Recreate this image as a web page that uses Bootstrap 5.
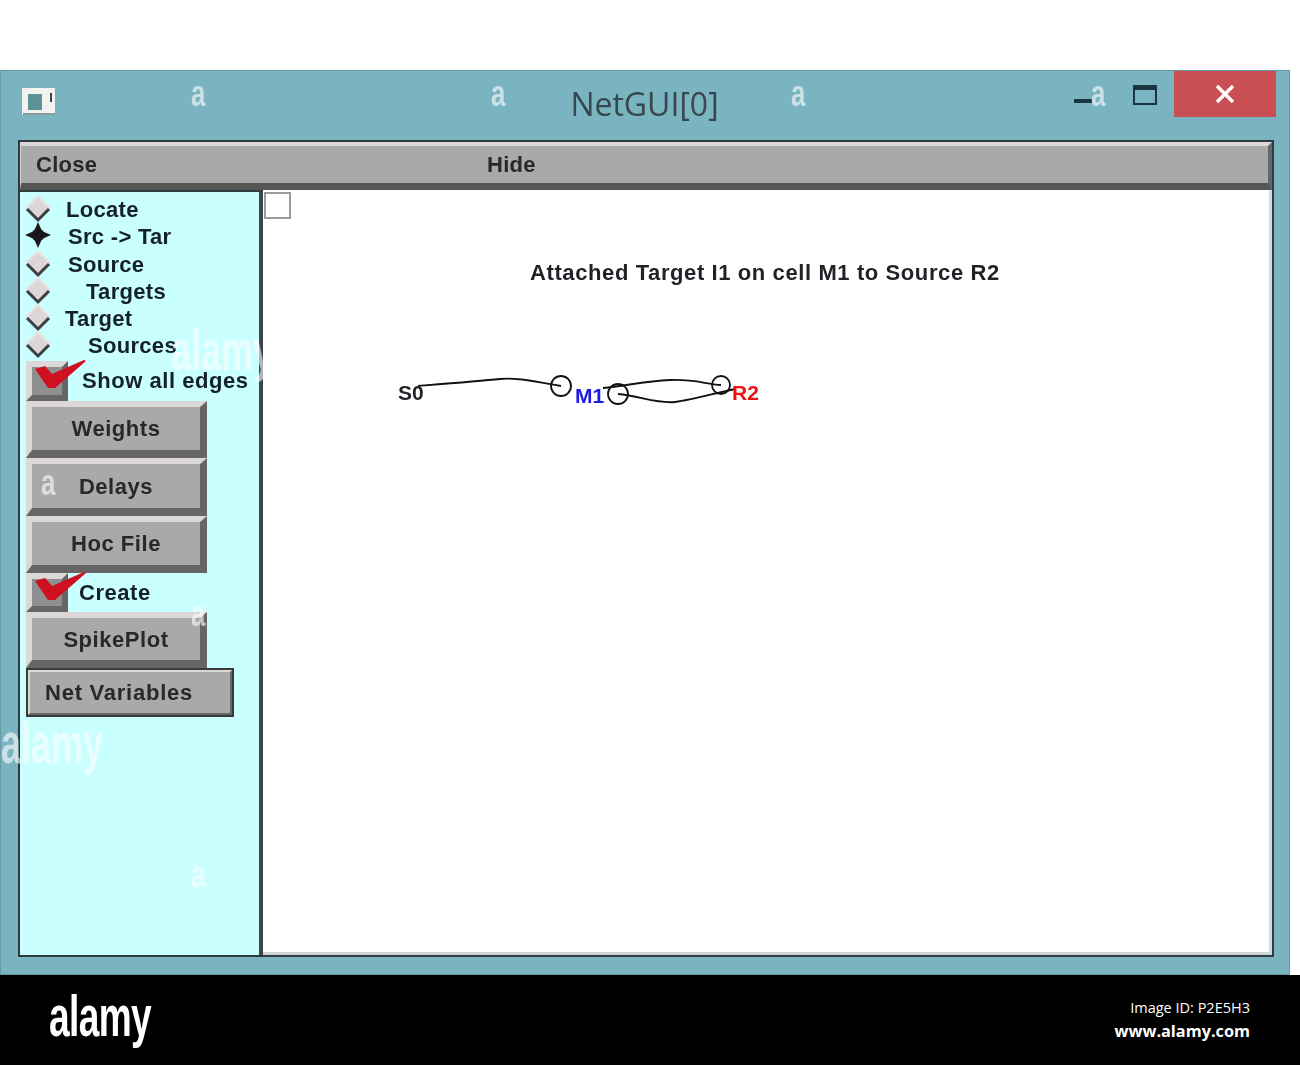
<!DOCTYPE html>
<html lang="en">
<head>
  <meta charset="UTF-8"/>
  <title>NetGUI[0]</title>
  <link href="https://cdn.jsdelivr.net/npm/bootstrap@5.3.0/dist/css/bootstrap.min.css" rel="stylesheet"/>
  <style>
    body { background: #fff; font-family: "Liberation Sans", Arial, sans-serif; overflow: hidden; }
    .page-top { height: 70px; }
    .win { width: 1290px; height: 905px; background: #7ab4c1; border: 1px solid #6a98a6; position: relative; }
    .win-title { height: 69px; position: relative; }
    .app-ico { width: 33px; height: 27px; margin-left: 21px; filter: blur(.7px); }
    .win-name { position: absolute; left: 0; right: 0; top: 10px; padding-right: 1px; text-align: center; font-family: "Open Sans", sans-serif; font-size: 32px; line-height: 46px; color: #38464d; filter: blur(.5px); }
    .ctl-min { position: absolute; left: 1073px; top: 28px; width: 18px; height: 4px; background: #1c3340; }
    .ctl-max { position: absolute; left: 1132px; top: 14px; width: 24px; height: 20px; border: 2px solid #1c3340; border-top-width: 5px; }
    .ctl-close { position: absolute; left: 1173px; top: 0; width: 102px; height: 46px; background: #c94f52; display: flex; align-items: center; justify-content: center; }
    .frame { margin-left: 17px; width: 1256px; height: 817px; border: 2px solid #2e3b40; background: #fff; }
    .menu-bar { height: 48px; background: #a9a9a9; border: 4px solid; border-bottom-width: 7px; border-color: #dcd8d8 #666 #555 #dcd8d8; border-left-width: 1px; padding-left: 15px; font-size: 22px; font-weight: 700; color: #26292c; letter-spacing: .3px; filter: blur(.45px); }
    .menu-close { width: 451px; }
    .work { height: 765px; }
    .side { width: 243px; background: #caffff; border-top: 2px solid #2e3b40; border-right: 4px solid #3b4446; padding: 4px 0 0 6px; position: relative; font-size: 22px; font-weight: 700; color: #14202b; letter-spacing: .55px; flex: none; }
    .side-txt { filter: blur(.45px); }
    .radio-row { height: 27.3px; line-height: 27px; letter-spacing: .3px; }
    .radio-row svg { width: 30px; height: 30px; flex: none; margin: -3px 13px 0 -3px; filter: blur(.5px); }
    .pad-src { padding-left: 2px; }
    .ind-targets { padding-left: 20px; }
    .ind-sources { padding-left: 22px; }
    .pad-target { margin-left: -1px; }
    .chk-wrap { position: relative; }
    .chk-first { height: 40px; margin-top: 1px; }
    .chk-second { height: 38.5px; }
    .chk-box { width: 42px; height: 100%; background: #8f8f8f; border: 6px solid; border-color: #dcd8d8 #666 #666 #dcd8d8; flex: none; }
    .chk-wrap svg { position: absolute; left: 9px; top: -2px; width: 52px; height: 32px; filter: blur(.35px); }
    .gap-show { margin-left: 14px; }
    .gap-create { margin-left: 11px; }
    .net-btn.btn { width: 181px; height: 57.5px; background: #a9a9a9; border: 6px solid; border-right-width: 7px; border-bottom-width: 8px; border-color: #dcd8d8 #666 #666 #dcd8d8; border-radius: 0; padding: 0; font-size: 22px; font-weight: 700; color: #26292c; letter-spacing: .55px; display: block; }
    .net-btn span { filter: blur(.45px); display: block; }
    .net-btn.btn-spike { height: 56.5px; }
    .net-btn.btn-vars { width: 208px; height: 49px; border-width: 4px; outline: 2px solid #3a3a3a; outline-offset: -2px; padding-right: 22px; letter-spacing: .75px; }
    .canvas { flex: 1; position: relative; background: #fff; border-right: 3px solid #d9dcdc; border-bottom: 3px solid #cfd4d4; }
    .corner-box { position: absolute; left: 1px; top: 2px; width: 27px; height: 27px; border: 2px solid #9b9b9b; background: #fff; }
    .diag-msg { position: absolute; left: 267px; top: 66px; font-size: 22px; font-weight: 700; color: #1f2226; white-space: nowrap; letter-spacing: .6px; filter: blur(.45px); }
    .diag-lbl { position: absolute; font-size: 21px; font-weight: 700; line-height: 24px; filter: blur(.5px); }
    .wire { position: absolute; left: 132px; top: 176px; width: 380px; height: 60px; filter: blur(.5px); }
    .wm { position: absolute; color: #fff; opacity: .6; font-family: "Liberation Sans", sans-serif; font-weight: 700; line-height: 1; pointer-events: none; transform: scaleX(.72); transform-origin: left top; }
    .wm-a { font-size: 36px; }
    .wm-logo { font-size: 58px; transform: scaleX(.62); }
    .foot { position: absolute; left: 0; top: 975px; width: 1300px; height: 90px; background: #000; color: #fff; }
    .foot-logo { position: absolute; left: 49px; top: 9px; font-size: 58px; font-weight: 700; line-height: 1.1; letter-spacing: -1px; transform: scaleX(.64); transform-origin: left top; }
    .foot-info { position: absolute; right: 50px; top: 22px; text-align: right; font-family: "Open Sans", sans-serif; }
    .foot-id { font-size: 14.5px; line-height: 22px; }
    .foot-url { font-size: 16.3px; font-weight: 700; line-height: 24px; }
  </style>
</head>
<body>
  <svg width="0" height="0" class="d-block position-absolute">
    <symbol id="dia" viewBox="0 0 30 30">
      <path d="M15 3 27 15 15 27 3 15Z" fill="#dcd6d6"/>
      <path d="M3 15 15 3 27 15" fill="none" stroke="#e8e4e4" stroke-width="2"/>
      <path d="M4 16 15 27 26 16" fill="none" stroke="#3c3f42" stroke-width="3"/>
    </symbol>
    <symbol id="dia-on" viewBox="0 0 30 30">
      <path d="M15 2 19 11 28 15 19 19 15 28 11 19 2 15 11 11Z" fill="#1b1b1f"/>
      <circle cx="15" cy="15" r="6.5" fill="#17171b"/>
    </symbol>
    <symbol id="tick" viewBox="0 0 52 32">
      <path d="M0 10 10 7 17 15 49 1 51 2 20 29 13 29Z" fill="#cf1020"/>
    </symbol>
  </svg>

  <div class="page-top"></div>
  <div class="win">
    <div class="win-title d-flex align-items-center">
      <svg class="app-ico mb-2" viewBox="0 0 33 27">
        <rect width="33" height="27" fill="#f2f2ee"/>
        <rect x="1" y="25" width="32" height="2" fill="#8b9aa0"/>
        <rect x="6" y="6" width="14" height="16" fill="#5d9297"/>
        <rect x="28" y="5" width="2" height="9" fill="#37474f"/>
      </svg>
      <div class="win-name">NetGUI[0]</div>
      <div class="ctl-min"></div>
      <div class="ctl-max"></div>
      <div class="ctl-close">
        <svg width="20" height="20" viewBox="0 0 20 20"><path d="M2 2 18 18M18 2 2 18" stroke="#fff" stroke-width="3.4"/></svg>
      </div>
    </div>

    <div class="frame">
      <div class="menu-bar d-flex align-items-center">
        <div class="menu-close">Close</div>
        <div>Hide</div>
      </div>
      <div class="work d-flex">
        <div class="side">
          <div class="radio-row d-flex"><svg><use href="#dia"/></svg><span class="side-txt">Locate</span></div>
          <div class="radio-row d-flex"><svg><use href="#dia-on"/></svg><span class="side-txt pad-src">Src -&gt; Tar</span></div>
          <div class="radio-row d-flex"><svg><use href="#dia"/></svg><span class="side-txt pad-src">Source</span></div>
          <div class="radio-row d-flex"><svg><use href="#dia"/></svg><span class="side-txt ind-targets">Targets</span></div>
          <div class="radio-row d-flex"><svg><use href="#dia"/></svg><span class="side-txt pad-target">Target</span></div>
          <div class="radio-row d-flex"><svg><use href="#dia"/></svg><span class="side-txt ind-sources">Sources</span></div>
          <div class="chk-first d-flex align-items-center chk-wrap">
            <div class="chk-box"></div><span class="side-txt gap-show">Show all edges</span>
            <svg><use href="#tick"/></svg>
          </div>
          <button class="btn net-btn" type="button"><span>Weights</span></button>
          <button class="btn net-btn" type="button"><span>Delays</span></button>
          <button class="btn net-btn" type="button"><span>Hoc File</span></button>
          <div class="chk-second d-flex align-items-center chk-wrap">
            <div class="chk-box"></div><span class="side-txt gap-create">Create</span>
            <svg><use href="#tick"/></svg>
          </div>
          <button class="btn net-btn btn-spike" type="button"><span>SpikePlot</span></button>
          <button class="btn net-btn btn-vars" type="button"><span>Net Variables</span></button>
        </div>
        <div class="canvas">
          <div class="corner-box"></div>
          <div class="diag-msg">Attached Target I1 on cell M1 to Source R2</div>
          <svg class="wire" viewBox="0 0 380 60" fill="none" stroke="#111" stroke-width="1.8">
            <path d="M23 20C60 17 85 15 105 13S145 17 166 20"/>
            <circle cx="166" cy="20" r="10"/>
            <circle cx="223" cy="28" r="10"/>
            <circle cx="326" cy="19" r="9"/>
            <path d="M208 22C230 20 250 15 275 14S310 18 326 19"/>
            <path d="M223 28C245 30 262 38 280 36S320 27 340 23"/>
          </svg>
          <div class="diag-lbl" style="left:135px;top:191px;color:#1f2226">S0</div>
          <div class="diag-lbl" style="left:312px;top:194px;color:#1c1ce0">M1</div>
          <div class="diag-lbl" style="left:469px;top:191px;color:#ee1111">R2</div>
        </div>
      </div>
    </div>

    <div class="wm wm-a" style="left:190px;top:5px">a</div>
    <div class="wm wm-a" style="left:490px;top:5px">a</div>
    <div class="wm wm-a" style="left:790px;top:5px">a</div>
    <div class="wm wm-a" style="left:1090px;top:5px">a</div>
    <div class="wm wm-a" style="left:40px;top:394px">a</div>
    <div class="wm wm-a" style="left:190px;top:525px">a</div>
    <div class="wm wm-a" style="left:190px;top:786px">a</div>
    <div class="wm wm-logo" style="left:170px;top:250px">alamy</div>
    <div class="wm wm-logo" style="left:0;top:643px">alamy</div>
  </div>

  <div class="foot">
    <div class="foot-logo">alamy</div>
    <div class="foot-info">
      <div class="foot-id">Image ID: P2E5H3</div>
      <div class="foot-url">www.alamy.com</div>
    </div>
  </div>
  <script src="https://cdn.jsdelivr.net/npm/bootstrap@5.3.0/dist/js/bootstrap.bundle.min.js"></script>
</body>
</html>
